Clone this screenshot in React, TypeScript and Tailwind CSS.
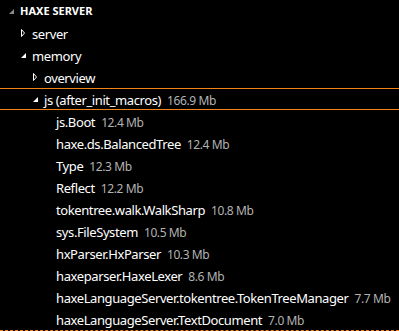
import React from "react";

type Row = {
  label: string;
  desc?: string;
  depth: number;
  twistie?: "open" | "closed";
  focused?: boolean;
};

const rows: Row[] = [
  { label: "server", depth: 1, twistie: "closed" },
  { label: "memory", depth: 1, twistie: "open" },
  { label: "overview", depth: 2, twistie: "closed" },
  { label: "js (after_init_macros)", desc: "166.9 Mb", depth: 2, twistie: "open", focused: true },
  { label: "js.Boot", desc: "12.4 Mb", depth: 3 },
  { label: "haxe.ds.BalancedTree", desc: "12.4 Mb", depth: 3 },
  { label: "Type", desc: "12.3 Mb", depth: 3 },
  { label: "Reflect", desc: "12.2 Mb", depth: 3 },
  { label: "tokentree.walk.WalkSharp", desc: "10.8 Mb", depth: 3 },
  { label: "sys.FileSystem", desc: "10.5 Mb", depth: 3 },
  { label: "hxParser.HxParser", desc: "10.3 Mb", depth: 3 },
  { label: "haxeparser.HaxeLexer", desc: "8.6 Mb", depth: 3 },
  { label: "haxeLanguageServer.tokentree.TokenTreeManager", desc: "7.7 Mb", depth: 3 },
  { label: "haxeLanguageServer.TextDocument", desc: "7.0 Mb", depth: 3 },
];

function Twistie({ kind, color = "#fff" }: { kind?: "open" | "closed"; color?: string }) {
  if (!kind) return <span className="w-3 shrink-0" />;
  return (
    <span className="flex w-3 shrink-0 items-center">
      {kind === "closed" ? (
        <svg width="6" height="8" viewBox="0 0 6 8">
          <path d="M1.5 0.5 L4.5 4 L1.5 7.5 Z" fill="none" stroke={color} strokeWidth="1" />
        </svg>
      ) : (
        <svg width="7" height="7" viewBox="0 0 7 7">
          <path d="M6 1 L6 6 L1 6 Z" fill={color} />
        </svg>
      )}
    </span>
  );
}

export default function App() {
  return (
    <div
      className="h-[331px] w-[399px] overflow-hidden bg-black text-[13px] text-white"
      style={{ fontFamily: '"Noto Sans", "Open Sans", sans-serif' }}
    >
      <div className="flex h-[22px] items-center pl-2">
        <Twistie kind="open" color="#8a8a8a" />
        <span className="pt-px text-[11px] font-bold">HAXE SERVER</span>
      </div>
      {rows.map((r) => (
        <div
          key={r.label}
          className={`flex h-[22px] items-center whitespace-nowrap ${
            r.focused ? "border-y border-[#f38518]" : ""
          }`}
          style={{ paddingLeft: 8 + r.depth * 12 }}
        >
          <Twistie kind={r.twistie} />
          <span className="pt-[3px] tracking-[-0.4px]">{r.label}</span>
          {r.desc && (
            <span className="ml-[6px] pt-[3px] text-[12px] tracking-[-0.4px] text-[#b3b3b3]">{r.desc}</span>
          )}
        </div>
      ))}
      <div className="h-[22px] border-t border-dashed border-[#f38518]" />
    </div>
  );
}
